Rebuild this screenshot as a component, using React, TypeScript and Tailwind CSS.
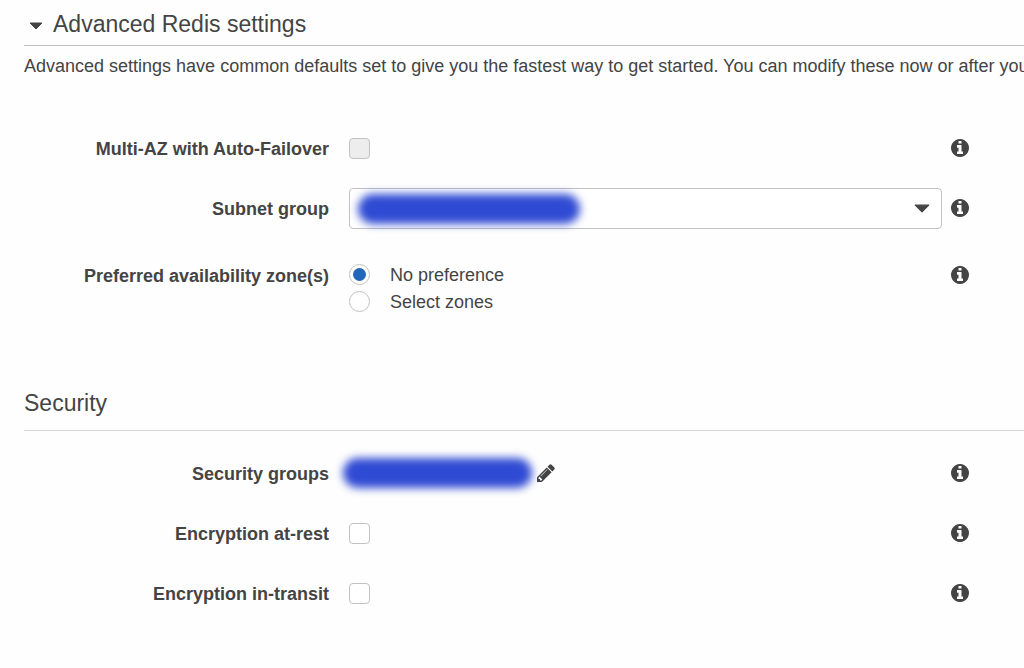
import { ReactNode, useState } from 'react';

const checkboxClass =
  'block size-[21px] appearance-none rounded border border-[#c2c2c2] bg-white checked:bg-[#2166b8] disabled:bg-[#ededed]';

const InfoIcon = () => (
  <svg
    viewBox="128 128 1536 1536"
    className="block size-[18px]"
    fill="currentColor"
    aria-hidden="true"
  >
    <path d="M1152 1376v-160q0-14-9-23t-23-9h-96v-512q0-14-9-23t-23-9h-320q-14 0-23 9t-9 23v160q0 14 9 23t23 9h96v320h-96q-14 0-23 9t-9 23v160q0 14 9 23t23 9h448q14 0 23-9t9-23zm-128-896v-160q0-14-9-23t-23-9h-192q-14 0-23 9t-9 23v160q0 14 9 23t23 9h192q14 0 23-9t9-23zm640 416q0 209-103 385.5t-279.5 279.5-385.5 103-385.5-103-279.5-279.5-103-385.5 103-385.5 279.5-279.5 385.5-103 385.5 103 279.5 279.5 103 385.5z" />
  </svg>
);

const PencilIcon = () => (
  <svg
    viewBox="128 128 1536 1536"
    className="block size-[18px]"
    fill="currentColor"
    aria-hidden="true"
  >
    <path d="M491 1536l91-91-235-235-91 91v107h128v128h107zm523-928q0-22-22-22-10 0-17 7l-542 542q-7 7-7 17 0 22 22 22 10 0 17-7l542-542q7-7 7-17zm-54-192l416 416-832 832h-416v-416zm683 96q0 53-37 90l-166 166-416-416 166-165q36-38 90-38 53 0 91 38l235 234q37 39 37 91z" />
  </svg>
);

const Caret = ({ className }: { className: string }) => (
  <svg viewBox="0 0 14 8" className={className} aria-hidden="true">
    <path
      d="M1 1h12L7 7z"
      fill="currentColor"
      stroke="currentColor"
      strokeWidth="1"
      strokeLinejoin="round"
    />
  </svg>
);

interface FieldRowProps {
  label: string;
  htmlFor?: string;
  labelId?: string;
  children: ReactNode;
}

const FieldRow = ({ label, htmlFor, labelId, children }: FieldRowProps) => (
  <div className="grid grid-cols-[305px_minmax(0,1fr)_18px] items-start">
    <div className="flex h-10 items-center justify-end pt-0.5 text-right font-bold">
      {htmlFor ? (
        <label htmlFor={htmlFor}>{label}</label>
      ) : (
        <span id={labelId}>{label}</span>
      )}
    </div>
    <div className="flex min-h-10 items-center pr-[9px] pl-5">{children}</div>
    <div className="flex h-10 items-center">
      <button type="button" aria-label={`About ${label}`}>
        <InfoIcon />
      </button>
    </div>
  </div>
);

interface ZoneOptionProps {
  label: string;
  value: string;
  selected: string;
  onSelect: (value: string) => void;
}

const ZoneOption = ({ label, value, selected, onSelect }: ZoneOptionProps) => (
  <label className="flex h-[27px] items-center gap-5">
    <input
      type="radio"
      name="zones"
      value={value}
      checked={selected === value}
      onChange={() => onSelect(value)}
      className="size-[21px] appearance-none rounded-full border border-[#c2c2c2] bg-white bg-clip-content p-[3px] checked:bg-[#2166b8]"
    />
    {label}
  </label>
);

export default function App() {
  const [expanded, setExpanded] = useState(true);
  const [zones, setZones] = useState('none');

  return (
    <main className="min-h-screen overflow-hidden bg-[#fefefe] pb-12 pl-6 font-['Liberation_Sans',Arial,sans-serif] text-lg text-[#444]">
      <section>
        <h2 className="border-b border-[#bfbfbf] pt-1.5 pb-[3px] text-[23px] leading-9">
          <button
            type="button"
            aria-expanded={expanded}
            onClick={() => setExpanded(!expanded)}
            className="flex items-center gap-2.5 pl-[5px]"
          >
            <Caret className="mt-1 h-2 w-3.5" />
            Advanced Redis settings
          </button>
        </h2>

        {expanded && (
          <>
            <p className="overflow-hidden pt-1.5 leading-7 whitespace-nowrap">
              Advanced settings have common defaults set to give you the fastest
              way to get started. You can modify these now or after your cluster
              has been created.
            </p>

            <div className="flex flex-col gap-5 pt-12 pr-[55px]">
              <FieldRow label="Multi-AZ with Auto-Failover" htmlFor="multi-az">
                <input
                  id="multi-az"
                  type="checkbox"
                  disabled
                  className={checkboxClass}
                />
              </FieldRow>

              <FieldRow label="Subnet group" htmlFor="subnet-group">
                <div className="relative w-full">
                  <select
                    id="subnet-group"
                    className="block h-[41px] w-full appearance-none rounded border border-[#c2c2c2] bg-white px-3"
                  >
                    <option value="" />
                  </select>
                  <span className="pointer-events-none absolute top-[6px] left-[9px] h-[30px] w-[222px] rounded-full bg-[#304bd3] blur-[4px]" />
                  <Caret className="pointer-events-none absolute top-4 right-3 h-[9px] w-4" />
                </div>
              </FieldRow>

              <div className="pt-1.5">
                <FieldRow
                  label="Preferred availability zone(s)"
                  labelId="zones-label"
                >
                  <div
                    role="radiogroup"
                    aria-labelledby="zones-label"
                    className="pt-1.5"
                  >
                    <ZoneOption
                      label="No preference"
                      value="none"
                      selected={zones}
                      onSelect={setZones}
                    />
                    <ZoneOption
                      label="Select zones"
                      value="select"
                      selected={zones}
                      onSelect={setZones}
                    />
                  </div>
                </FieldRow>
              </div>
            </div>
          </>
        )}
      </section>

      <section className="pt-[66px]">
        <h2 className="border-b border-[#d5d5d5] pt-1 pb-[9px] text-[23px] leading-9">
          Security
        </h2>

        <div className="flex flex-col gap-5 pt-[22px] pr-[55px]">
          <FieldRow label="Security groups">
            <span className="-ml-1.5 h-[30px] w-[189px] rounded-full bg-[#304bd3] blur-[4px]" />
            <button
              type="button"
              aria-label="Edit security groups"
              className="ml-[5px]"
            >
              <PencilIcon />
            </button>
          </FieldRow>

          <FieldRow label="Encryption at-rest" htmlFor="at-rest">
            <input id="at-rest" type="checkbox" className={checkboxClass} />
          </FieldRow>

          <FieldRow label="Encryption in-transit" htmlFor="in-transit">
            <input id="in-transit" type="checkbox" className={checkboxClass} />
          </FieldRow>
        </div>
      </section>
    </main>
  );
}
